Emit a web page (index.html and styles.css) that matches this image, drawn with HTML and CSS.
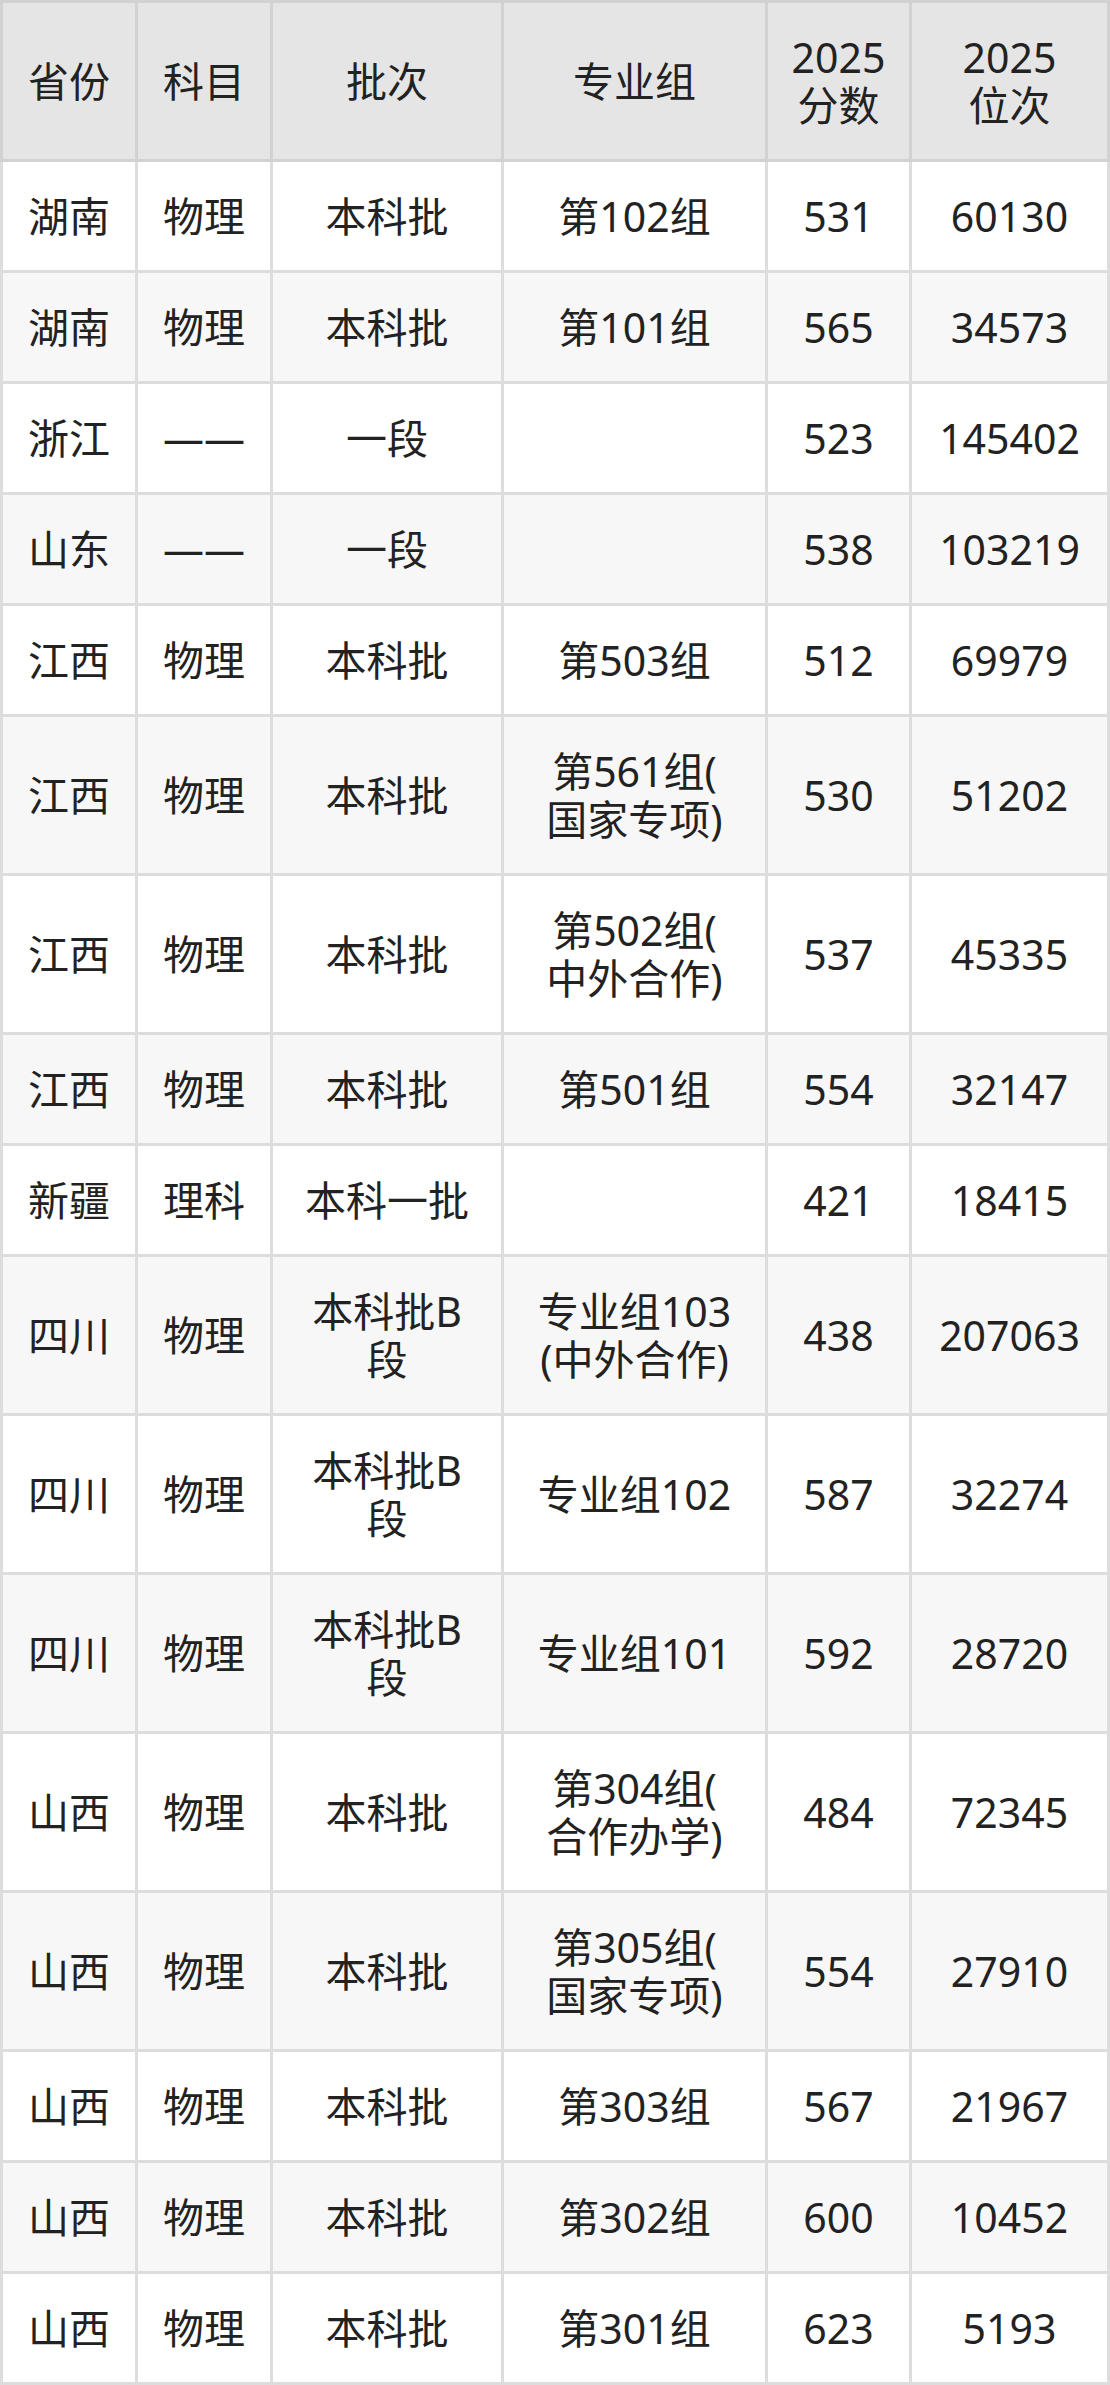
FILE: index.html
```html
<!DOCTYPE html>
<html lang="zh-CN">
<head>
<meta charset="utf-8">
<title>2025 分数位次</title>
<link rel="stylesheet" href="styles.css">
</head>
<body>
<table class="score-table">
  <thead>
    <tr>
      <th class="c-prov">省份</th>
      <th class="c-subj">科目</th>
      <th class="c-batch">批次</th>
      <th class="c-group">专业组</th>
      <th class="c-score">2025<br>分数</th>
      <th class="c-rank">2025<br>位次</th>
    </tr>
  </thead>
  <tbody>
    <tr><td>湖南</td><td>物理</td><td>本科批</td><td>第102组</td><td>531</td><td>60130</td></tr>
    <tr><td>湖南</td><td>物理</td><td>本科批</td><td>第101组</td><td>565</td><td>34573</td></tr>
    <tr><td>浙江</td><td>——</td><td>一段</td><td></td><td>523</td><td>145402</td></tr>
    <tr><td>山东</td><td>——</td><td>一段</td><td></td><td>538</td><td>103219</td></tr>
    <tr><td>江西</td><td>物理</td><td>本科批</td><td>第503组</td><td>512</td><td>69979</td></tr>
    <tr><td>江西</td><td>物理</td><td>本科批</td><td>第561组(<br>国家专项)</td><td>530</td><td>51202</td></tr>
    <tr><td>江西</td><td>物理</td><td>本科批</td><td>第502组(<br>中外合作)</td><td>537</td><td>45335</td></tr>
    <tr><td>江西</td><td>物理</td><td>本科批</td><td>第501组</td><td>554</td><td>32147</td></tr>
    <tr><td>新疆</td><td>理科</td><td>本科一批</td><td></td><td>421</td><td>18415</td></tr>
    <tr><td>四川</td><td>物理</td><td>本科批B<br>段</td><td>专业组103<br>(中外合作)</td><td>438</td><td>207063</td></tr>
    <tr><td>四川</td><td>物理</td><td>本科批B<br>段</td><td>专业组102</td><td>587</td><td>32274</td></tr>
    <tr><td>四川</td><td>物理</td><td>本科批B<br>段</td><td>专业组101</td><td>592</td><td>28720</td></tr>
    <tr><td>山西</td><td>物理</td><td>本科批</td><td>第304组(<br>合作办学)</td><td>484</td><td>72345</td></tr>
    <tr><td>山西</td><td>物理</td><td>本科批</td><td>第305组(<br>国家专项)</td><td>554</td><td>27910</td></tr>
    <tr><td>山西</td><td>物理</td><td>本科批</td><td>第303组</td><td>567</td><td>21967</td></tr>
    <tr><td>山西</td><td>物理</td><td>本科批</td><td>第302组</td><td>600</td><td>10452</td></tr>
    <tr><td>山西</td><td>物理</td><td>本科批</td><td>第301组</td><td>623</td><td>5193</td></tr>
  </tbody>
</table>
</body>
</html>
```
FILE: styles.css
```css
html, body {
  margin: 0;
  padding: 0;
  background: #ffffff;
}

.score-table {
  width: 1110px;
  border-collapse: separate;
  border-spacing: 0;
  table-layout: fixed;
  font-family: "Noto Sans", "Noto Sans CJK SC", sans-serif;
  font-size: 41px;
  line-height: 48px;
  color: #222222;
}

.score-table th,
.score-table td {
  box-sizing: border-box;
  padding: 30px 4px;
  text-align: center;
  vertical-align: middle;
  white-space: nowrap;
  font-weight: normal;
  border-right: 3px solid #dddddd;
  border-bottom: 3px solid #dddddd;
}

.score-table th:first-child,
.score-table td:first-child {
  border-left: 3px solid #dddddd;
}

.score-table th {
  background: #e5e5e5;
  border-top: 3px solid #d2d2d2;
  border-right-color: #d2d2d2;
  border-bottom-color: #d2d2d2;
}

.score-table th:first-child {
  border-left-color: #d2d2d2;
}

.score-table .c-prov { width: 138px; }
.score-table .c-subj { width: 135px; }
.score-table .c-batch { width: 231px; }
.score-table .c-group { width: 264px; }
.score-table .c-score { width: 144px; }
.score-table .c-rank { width: 198px; }

.score-table tbody tr:nth-child(even) td {
  background: #f7f7f7;
}
```
